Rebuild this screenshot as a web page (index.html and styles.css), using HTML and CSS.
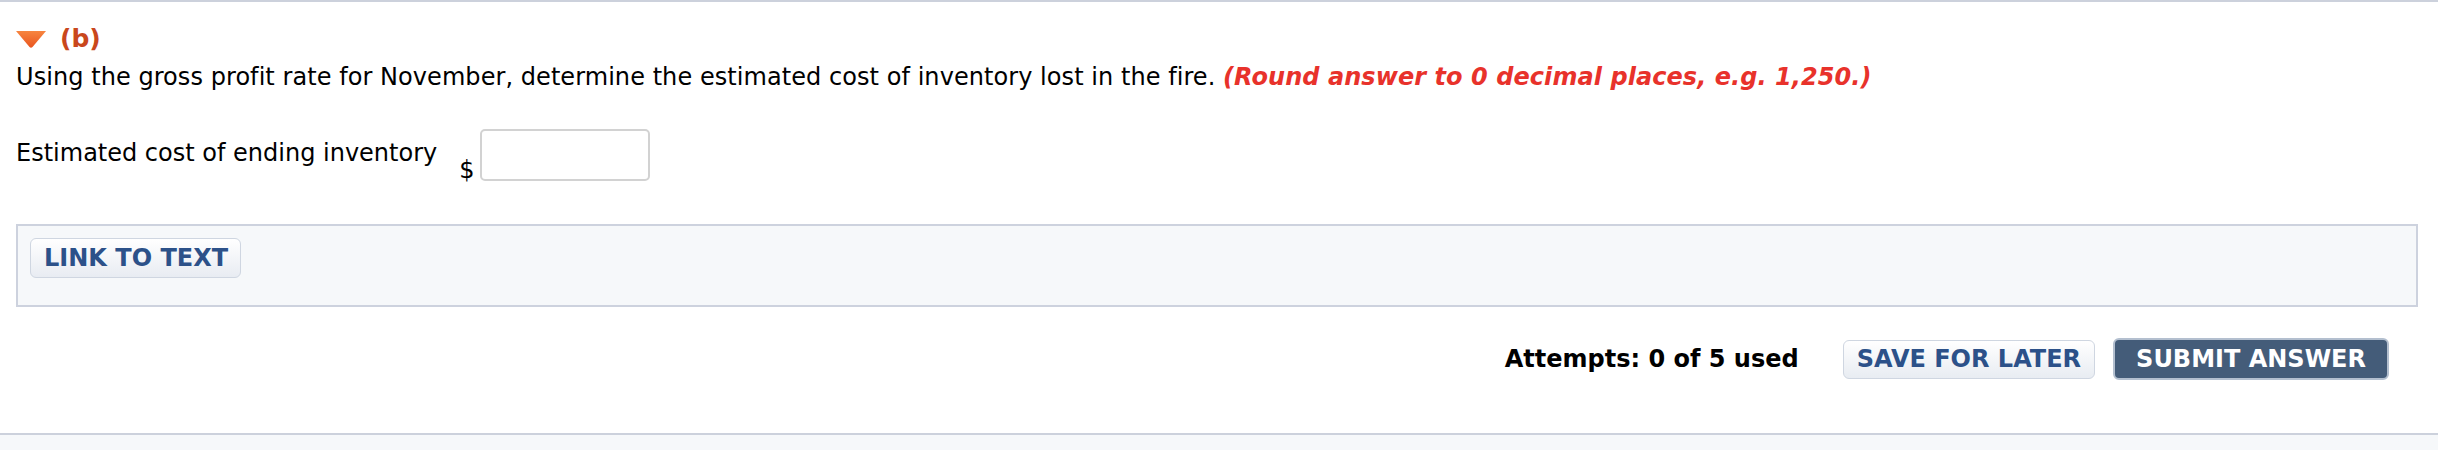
FILE: index.html
```html
<!DOCTYPE html>
<html>
<head>
<meta charset="utf-8">
<link rel="stylesheet" href="styles.css">
</head>
<body>
<div class="page">
  <div class="part">
    <div class="part-head">
      <svg class="caret" width="30" height="17" viewBox="0 0 30 17">
        <defs>
          <linearGradient id="cg" x1="0" y1="0" x2="0" y2="1">
            <stop offset="0" stop-color="#f7853f"/>
            <stop offset="1" stop-color="#e9551f"/>
          </linearGradient>
        </defs>
        <path d="M0 0 H30 L16.5 16 Q15 17.3 13.5 16 Z" fill="url(#cg)"/>
      </svg>
      <span class="part-label">(b)</span>
    </div>
    <p class="question">Using the gross profit rate for November, determine the estimated cost of inventory lost in the fire. <em class="note">(Round answer to 0 decimal places, e.g. 1,250.)</em></p>
    <div class="answer-row">
      <span class="answer-label">Estimated cost of ending inventory</span>
      <span class="currency">$</span>
      <input class="answer-input" type="text">
    </div>
    <div class="resources">
      <button class="btn btn-light">LINK TO TEXT</button>
    </div>
    <div class="actions">
      <span class="attempts">Attempts: 0 of 5 used</span>
      <button class="btn btn-light btn-save">SAVE FOR LATER</button>
      <button class="btn btn-dark">SUBMIT ANSWER</button>
    </div>
  </div>
  <div class="footer"></div>
</div>
</body>
</html>
```
FILE: styles.css
```css
html, body {
  margin: 0;
  padding: 0;
  background: #ffffff;
}
body {
  font-family: Verdana, "DejaVu Sans", sans-serif;
  font-size: 24px;
  color: #000;
}
.page {
  border-top: 2px solid #ccd1dc;
}
.part {
  padding: 0 20px 0 16px;
}
.part-head {
  display: flex;
  align-items: center;
  height: 26px;
  margin-top: 24px;
}
.caret {
  display: block;
  margin-right: 14px;
  margin-top: 1px;
}
.part-label {
  font-weight: bold;
  color: #c9471c;
  font-size: 25px;
  line-height: 26px;
}
.question {
  margin: 10px 0 0 0;
  line-height: 30px;
  white-space: nowrap;
  letter-spacing: 0.06px;
}
.note {
  font-weight: bold;
  font-style: italic;
  color: #e8322b;
}
.answer-row {
  display: flex;
  align-items: flex-start;
  margin-top: 37px;
}
.answer-label {
  line-height: 30px;
  padding-top: 9px;
  margin-right: 22px;
}
.currency {
  align-self: flex-end;
  line-height: 22px;
  margin-right: 5px;
}
.answer-input {
  width: 170px;
  height: 52px;
  box-sizing: border-box;
  border: 2px solid #d2d2d2;
  border-radius: 5px;
  background: #fff;
  margin: 0;
  padding: 0 8px;
  font: inherit;
}
.resources {
  margin-top: 43px;
  border: 2px solid #cdd2de;
  background: #f6f8fa;
  padding: 12px 12px 27px 12px;
  display: flex;
}
.btn {
  font-family: Verdana, "DejaVu Sans", sans-serif;
  font-weight: bold;
  font-size: 24px;
  margin: 0;
  box-sizing: border-box;
  cursor: pointer;
  white-space: nowrap;
}
.btn-light {
  height: 40px;
  padding: 0 12px 0 13px;
  border: 1px solid #cfd6e1;
  border-radius: 6px;
  color: #2c5189;
  background: linear-gradient(#ffffff, #e8ecf2);
}
.actions {
  display: flex;
  justify-content: flex-end;
  align-items: center;
  margin-top: 31px;
  padding-right: 29px;
  height: 42px;
}
.attempts {
  font-weight: bold;
  font-size: 24px;
  margin-right: 44px;
}
.btn-save {
  margin-right: 18px;
  height: 39px;
  padding: 0 13px;
}
.btn-dark {
  height: 42px;
  padding: 0 21px;
  border: 2px solid #b3bfcf;
  border-radius: 6px;
  background: #445c79;
  color: #ffffff;
}
.footer {
  margin-top: 53px;
  border-top: 2px solid #ccd1dc;
  background: #f6f8fa;
  height: 16px;
}
```
